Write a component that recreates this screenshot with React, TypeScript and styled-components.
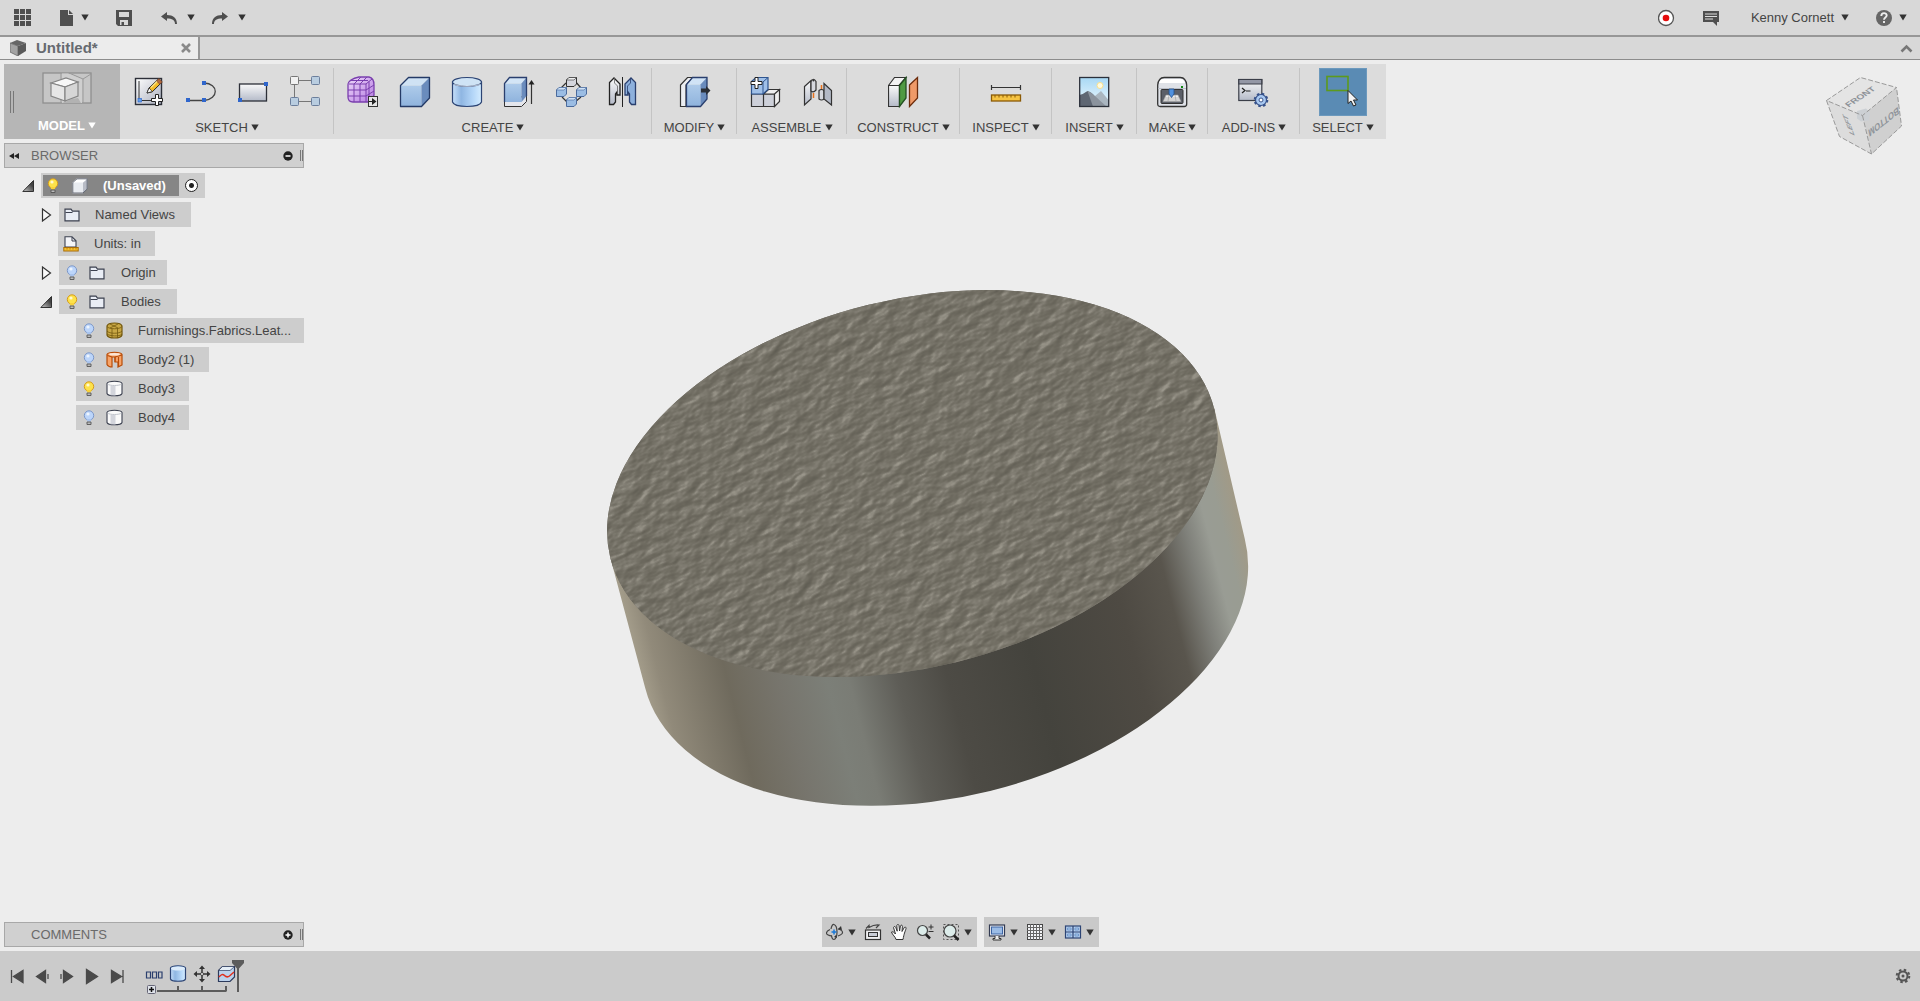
import React from "react";
import styled, { createGlobalStyle, css } from "styled-components";

const GlobalStyle = createGlobalStyle`
  *, *::before, *::after { box-sizing: border-box; }
  body {
    margin: 0;
    background: #ededed;
    color: #444;
    font: 13px/16px "Liberation Sans", Arial, sans-serif;
  }
  button {
    margin: 0;
    padding: 0;
    border: 0;
    background: none;
    color: inherit;
    font: inherit;
    cursor: pointer;
  }
  svg { display: block; flex: none; }
`;

/* ---------- layout ---------- */

const Page = styled.div`
  display: flex;
  flex-direction: column;
  min-height: 100vh;
`;

const TopBar = styled.header`
  display: flex;
  align-items: center;
  justify-content: space-between;
  height: 37px;
  padding: 0 13px;
  background: #d8d8d8;
  border-bottom: 2px solid #979797;
`;

const BarGroup = styled.div<{ $gap: number }>`
  display: flex;
  align-items: center;
  gap: ${(p) => p.$gap}px;
`;

const BarButton = styled.button<{ $gap?: number }>`
  display: flex;
  align-items: center;
  gap: ${(p) => p.$gap ?? 8}px;
  height: 24px;
`;

const TabRow = styled.div`
  display: flex;
  align-items: stretch;
  justify-content: space-between;
  height: 23px;
  background: #d8d8d8;
  border-bottom: 1px solid #8c8c8c;
`;

const Tab = styled.div`
  display: flex;
  align-items: center;
  width: 200px;
  padding: 0 7px 0 10px;
  background: #ececec;
  border-right: 2px solid #979797;
`;

const TabName = styled.span`
  flex: 1;
  padding-left: 10px;
  color: #666a70;
  font-size: 15px;
  font-weight: bold;
`;

const CollapseButton = styled.button`
  padding: 0 7px;
`;

const Viewport = styled.main`
  flex: 1;
  display: grid;
  grid-template: minmax(0, 1fr) / minmax(0, 1fr);
`;

const Canvas = styled.svg`
  grid-area: 1 / 1;
  width: 100%;
  height: 100%;
`;

const Overlay = styled.div`
  grid-area: 1 / 1;
  display: flex;
  flex-direction: column;
  justify-content: space-between;
  padding: 4px;
`;

const OverlayTop = styled.div`
  display: flex;
  justify-content: space-between;
`;

const OverlayLeft = styled.div`
  display: flex;
  flex-direction: column;
  align-items: flex-start;
  gap: 4px;
`;

const CubeHolder = styled.div`
  padding: 10px 12px 0 0;
`;

const OverlayBottom = styled.div`
  display: grid;
  grid-template-columns: 1fr auto 1fr;
  align-items: end;
`;

/* ---------- ribbon ---------- */

const Ribbon = styled.nav`
  display: flex;
  height: 75px;
  background: #dcdcdc;
`;

const Workspace = styled.button`
  display: flex;
  align-items: center;
  width: 116px;
  padding-left: 6px;
  background: #b6b6b6;
  color: #fff;
  font-weight: bold;
`;

const Grip = styled.span<{ $tall?: boolean }>`
  width: ${(p) => (p.$tall ? 4 : 3)}px;
  height: ${(p) => (p.$tall ? 22 : 11)}px;
  border: solid #777;
  border-width: 0 1px;
`;

const WorkspaceBody = styled.span`
  flex: 1;
  display: flex;
  flex-direction: column;
  align-items: center;
  gap: 14px;
  padding-top: 2px;
`;

const Label = styled.span`
  display: inline-flex;
  align-items: center;
  justify-content: center;
  gap: 3px;
`;

const Group = styled.section<{ $width: number }>`
  display: flex;
  flex-direction: column;
  align-items: center;
  min-width: ${(p) => p.$width}px;
  padding-top: 4px;
  background: linear-gradient(#c4c4c4, #c4c4c4) right 4px / 1px 66px no-repeat;
  &:last-child { background: none; }
`;

const IconRow = styled.div`
  display: flex;
  gap: 4px;
`;

const IconButton = styled.button<{ $active?: boolean }>`
  display: flex;
  align-items: center;
  justify-content: center;
  width: 48px;
  height: 48px;
  ${(p) =>
    p.$active &&
    css`
      background: #5a8bb4;
      border: 1px solid #6c99bd;
    `}
`;

const MenuButton = styled.button`
  height: 23px;
  white-space: nowrap;
`;

/* ---------- browser ---------- */

const Panel = styled.aside`
  width: 300px;
`;

const PanelHead = styled.div`
  display: flex;
  align-items: center;
  width: 300px;
  height: 25px;
  padding: 0 0 0 3px;
  background: #d0d0d0;
  border: 1px solid #a8a8a8;
`;

const HeadSlot = styled.span`
  width: 23px;
`;

const HeadTitle = styled.h2`
  flex: 1;
  margin: 0;
  color: #6a6a6a;
  font-size: 13px;
  font-weight: normal;
`;

const HeadTools = styled.span`
  display: flex;
  align-items: center;
  gap: 7px;
`;

const Tree = styled.ul`
  display: flex;
  flex-direction: column;
  gap: 4px;
  margin: 0;
  padding: 5px 0 0;
  list-style: none;
`;

const Row = styled.li<{ $indent: number }>`
  display: flex;
  align-items: center;
  height: 25px;
  padding-left: ${(p) => p.$indent}px;
`;

const Toggle = styled.button`
  width: 19px;
`;

const Node = styled.div<{ $width: number; $root?: boolean }>`
  display: flex;
  align-items: center;
  min-width: ${(p) => p.$width}px;
  height: 25px;
  background: #cdcdcd;
  ${(p) => p.$root && css`padding: 2px;`}
`;

const RootName = styled.div`
  display: flex;
  align-items: center;
  width: 136px;
  height: 21px;
  background: #868686;
  color: #fff;
  font-weight: bold;
`;

const Slot = styled.span<{ $width: number }>`
  display: flex;
  justify-content: center;
  width: ${(p) => p.$width}px;
`;

const NodeText = styled.span<{ $gap?: number }>`
  padding-left: ${(p) => p.$gap ?? 11}px;
  white-space: nowrap;
`;

const Radio = styled.input`
  appearance: none;
  width: 13px;
  height: 13px;
  margin: 0 0 0 6px;
  border: 1px solid #222;
  border-radius: 50%;
  background: radial-gradient(circle, #222 0 2px, #fff 3px);
`;

/* ---------- bottom ---------- */

const NavBars = styled.div`
  display: flex;
  gap: 7px;
`;

const NavBar = styled.div`
  display: flex;
  align-items: center;
  gap: 8px;
  height: 30px;
  padding: 0 5px 0 4px;
  background: #c9c9c9;
`;

const NavButton = styled.button`
  display: flex;
  align-items: center;
  gap: 4px;
`;

const Timeline = styled.footer`
  display: flex;
  align-items: center;
  justify-content: space-between;
  height: 50px;
  padding: 0 9px;
  background: #cbcbcb;
`;

const Playback = styled.div`
  display: flex;
  gap: 9px;
`;

const TimelineLeft = styled.div`
  display: flex;
  align-items: center;
  gap: 20px;
`;

/* ---------- small glyphs ---------- */

const Caret = ({ fill = "#333" }: { fill?: string }) => (
  <svg width="8" height="7" viewBox="0 0 8 7" aria-hidden="true">
    <path d="M.3 .5h7.400L4 6.500z" fill={fill} />
  </svg>
);

const Ico = ({ s = 32, w, children }: { s?: number; w?: number; children: React.ReactNode }) => (
  <svg width={w ?? s} height={s} viewBox={`0 0 ${w ?? s} ${s}`} fill="none" aria-hidden="true">
    {children}
  </svg>
);

const HiddenDefs = styled.svg`
  position: absolute;
`;

const Defs = () => (
  <HiddenDefs width="0" height="0" aria-hidden="true">
    <defs>
      <linearGradient id="blueFront" x1="0" y1="0" x2="0" y2="1">
        <stop offset="0" stopColor="#aecbea" /><stop offset="1" stopColor="#8fb3dd" />
      </linearGradient>
      <linearGradient id="blueRound" x1="0" y1="0" x2="1" y2="0">
        <stop offset="0" stopColor="#c6dffa" /><stop offset=".3" stopColor="#8fb6e2" />
        <stop offset=".7" stopColor="#b4d6f8" /><stop offset="1" stopColor="#d4ecff" />
      </linearGradient>
      <linearGradient id="grey" x1="0" y1="0" x2="0" y2="1">
        <stop offset="0" stopColor="#fafafa" /><stop offset="1" stopColor="#b4bac8" />
      </linearGradient>
      <linearGradient id="paper" x1="0" y1="0" x2="1" y2="1">
        <stop offset="0" stopColor="#fff" /><stop offset="1" stopColor="#a9aebd" />
      </linearGradient>
      <linearGradient id="purple" x1="0" y1="0" x2="1" y2="1">
        <stop offset="0" stopColor="#eed9fb" /><stop offset="1" stopColor="#b47ae0" />
      </linearGradient>
      <linearGradient id="sky" x1="0" y1="0" x2="0" y2="1">
        <stop offset="0" stopColor="#a8d8f4" /><stop offset="1" stopColor="#eef9ff" />
      </linearGradient>
      <linearGradient id="arrowDark" x1="1" y1="0" x2="0" y2="1">
        <stop offset=".3" stopColor="#444" /><stop offset="1" stopColor="#ccc" />
      </linearGradient>
    </defs>
  </HiddenDefs>
);

const NAVY = "#2a3f6e";

const MiniCube = ({ x, y, grey }: { x: number; y: number; grey?: boolean }) => (
  <g transform={`translate(${x - 5} ${y - 5})`} stroke={grey ? "#333" : "#4a6a9c"}>
    <path d="M.5 3L3 .5h7.500V7L8 9.500H.5z" fill={grey ? "#d4d6de" : "#9bbde4"} />
    <path d="M.5 3L3 .5h7.500L8 3z" fill={grey ? "#eee" : "#cfe2f6"} strokeWidth=".6" />
  </g>
);

const Dot = ({ x, y }: { x: number; y: number }) => (
  <rect x={x - 2} y={y - 2} width="4" height="4" fill="#2f66cc" />
);

const WhitePlus = ({ x, y }: { x: number; y: number }) => (
  <path transform={`translate(${x} ${y})`} d="M-1.500-5.500h3v4h4v3h-4v4h-3v-4h-4v-3h4z" fill="#fff" stroke="#222" />
);

/* ---------- ribbon icons ---------- */

const SketchIcon = () => (
  <Ico>
    <rect x="2.500" y="2.500" width="26" height="26" fill="url(#paper)" stroke="#2c2f38" strokeWidth="1.400" />
    <path d="M6 5v18M9 24.500h12" stroke="#333" />
    <rect x="5" y="22.500" width="3.500" height="3.500" fill="#62a0e8" stroke="#2f66cc" strokeWidth=".7" />
    <path d="M14 17l2-5L25.500 3l3.300 3.300-9.500 9.500z" fill="#f4bb2a" stroke="#222" />
    <path d="M16 12l3.300 3.500L14 17z" fill="#fff" stroke="#222" strokeWidth=".7" />
    <path d="M23.500 5L26 2.600l3.200 3.300-2.400 2.300z" fill="#b26a42" stroke="#7a4326" strokeWidth=".7" />
    <path d="M18 11.500l6-6" stroke="#fde588" strokeWidth="1.300" />
    <WhitePlus x={24} y={24} />
  </Ico>
);
const LineIcon = () => (
  <Ico>
    <path d="M3 24.500h16c15-1.500 15-17 0-17.500" stroke="#444" strokeWidth="1.300" />
    <Dot x={3} y={24} /><Dot x={19} y={24} /><Dot x={19} y={7} />
  </Ico>
);
const RectIcon = () => (
  <Ico>
    <rect x="2.500" y="8" width="27" height="17" fill="url(#grey)" stroke="#2c2f38" strokeWidth="1.300" />
    <Dot x={3} y={24} /><Dot x={29} y={8} />
  </Ico>
);
const PatternIcon = () => (
  <Ico>
    <path d="M10 4.500h12M5.500 9v12M10 25.500h12" stroke="#777" />
    <rect x="1.500" y=".5" width="8" height="8" rx="1" fill="#f1f1f1" stroke="#777" />
    {[[22.5, 0.5], [1.5, 21.5], [22.5, 21.5]].map(([x, y]) => (
      <rect key={`${x}-${y}`} x={x} y={y} width="8" height="8" rx="1" fill="#b9cde0" stroke="#6c7f9c" />
    ))}
  </Ico>
);
const FormIcon = () => (
  <Ico>
    <path d="M1 9Q1 6 4 4t8-3h10q5 1 5 8v10q-1 5-6 7H6q-5 0-5-5z" fill="url(#purple)" stroke="#7a3fae" strokeWidth="1.300" />
    <path d="M1 14h18l8-5M1 20h18l8-5M2 8h17l6-5M7 8v18M13 8v18M19 8v18M7 8l7-7M13 8l7-7M4 4.500h17M22 5.500v19" stroke="#7a3fae" />
    <rect x="21.500" y="20.500" width="9" height="10" fill="#e6e6e6" stroke="#333" />
    <path d="M22 25h3v-3l4.500 3.500L25 29v-3h-3z" fill="#222" />
  </Ico>
);
const BoxIcon = () => (
  <Ico>
    <path d="M1.500 9.500h21v21h-21z" fill="url(#blueFront)" />
    <path d="M1.500 9.500l8-8h21l-8 8z" fill="#cfe2f4" />
    <path d="M22.500 9.500l8-8V22l-8 8.500z" fill="#6a8cbd" />
    <path d="M1.500 9.500l8-8h21V22l-8 8.500h-21z" stroke="#243a66" strokeWidth="1.300" strokeLinejoin="round" />
  </Ico>
);
const CylinderIcon = () => (
  <Ico>
    <path d="M1.500 6v20c2 6 27 6 29 0V6z" fill="url(#blueRound)" stroke="#2c4474" strokeWidth="1.200" />
    <ellipse cx="16" cy="6" rx="14.500" ry="4.500" fill="#cfe3f5" stroke="#2c4474" strokeWidth="1.200" />
    <path d="M3 8c3 3 23 3 26 0" stroke="#fff" strokeWidth=".7" />
  </Ico>
);
const ExtrudeIcon = () => (
  <Ico>
    <path d="M1.500 25.500v5h17l5-5v-6z" fill="#e4e6ec" stroke="#333" />
    <path d="M1.500 7.500h17v18.500h-17z" fill="url(#blueFront)" />
    <path d="M1.500 7.500l5-6h17l-5 6z" fill="#d3e5f6" />
    <path d="M18.500 7.500l5-6V20l-5 6z" fill="#6a8cbd" />
    <path d="M1.500 26V7.500l5-6h17V20" stroke={NAVY} strokeWidth="1.300" />
    <path d="M28.500 28V6" stroke="#333" strokeWidth="1.200" />
    <path d="M28.500 4l3 4.500h-6z" fill="#222" />
  </Ico>
);
const RoundPatternIcon = () => (
  <Ico>
    <path d="M20 5l6 7M7 21l5 5M26 21l-6 5M6 12l5-5" stroke="#333" strokeWidth="1.200" />
    <MiniCube x={16} y={6} grey /><MiniCube x={6} y={16} /><MiniCube x={26} y={16} /><MiniCube x={16} y={26} />
  </Ico>
);
const MirrorIcon = () => (
  <Ico>
    <path d="M2.500 28.500v-22L7 2l6 6v11h-3v-3l-1.500 2v8l-2 2.500z" fill="url(#grey)" stroke="#222" strokeWidth="1.300" />
    <path d="M7.500 2v5l3 3v8" stroke="#666" strokeWidth=".8" />
    <path d="M15.500 1v30" stroke="#222" />
    <path d="M28.500 28.500v-22L24 2l-6 6v11h3v-3l1.500 2v8l2 2.500z" fill="#8db0dc" stroke={NAVY} strokeWidth="1.300" />
    <path d="M23.500 2v5l-3 3v8" stroke={NAVY} strokeWidth=".8" />
  </Ico>
);
const PressPullIcon = () => (
  <Ico>
    <path d="M1.500 9l7-7.500H14L7 9v21.500H1.500z" fill="#eceef2" stroke="#333" strokeWidth="1.200" />
    <path d="M7.500 8.500h14v22h-14z" fill="url(#blueFront)" />
    <path d="M7.500 8.500l6-7H28l-6.500 7z" fill="#d0e3f6" />
    <path d="M21.500 8.500L28 1.500V23l-6.500 7.500z" fill="#6a8cbd" />
    <path d="M7.500 30.500v-22l6-7H28V23l-6.500 7.500z" stroke={NAVY} strokeWidth="1.300" />
    <path d="M22 12.500h5V10l4.500 4.500L27 19v-2.500h-5z" fill="#2b2f36" />
  </Ico>
);
const NewComponentIcon = () => (
  <Ico>
    <path d="M1.500 18h12v12.500h-12zM13.500 18h11v12.500h-11z" fill="#cdd0d9" stroke="#333" strokeWidth="1.200" />
    <path d="M13.500 18l5-4.500h11l-5 4.500zM24.500 30.500l5-5v-12l-5 4.500z" fill="#eee" stroke="#333" strokeWidth="1.200" />
    <path d="M1.500 5.500L6 1.500h12v12l-5 4.500H1.500z" fill="#a0c0e8" stroke="#2f5590" strokeWidth="1.200" />
    <path d="M13 6v12M13 6l5-4.500" stroke="#2f5590" />
    <WhitePlus x={6.500} y={7} />
  </Ico>
);
const JointIcon = () => (
  <Ico>
    <path d="M2.500 10.500L9 4.500V23l-6.500 6z" fill="url(#grey)" stroke="#333" strokeWidth="1.200" />
    <path d="M9 5.500q2.500-4.500 5 0V14q-2.500 3-5 1z" fill="#d6d8de" stroke="#333" strokeWidth="1.200" />
    <circle cx="11.500" cy="4.500" r="1" fill="#333" />
    <path d="M11.500 17v5M19.500 9v6" stroke="#e8721c" strokeWidth="1.500" />
    <path d="M17 14.500q2.500-2 5 0V23q-2.500 2-5 0z" fill="#d6d8de" stroke="#333" strokeWidth="1.200" />
    <path d="M22 7.500l7.500 7v14.500L22 23z" fill="#b3b9c6" stroke="#333" strokeWidth="1.200" />
  </Ico>
);
const PlaneIcon = () => (
  <Ico>
    <path d="M.5 9.500h11v21H.5z" fill="url(#grey)" stroke="#333" strokeWidth="1.200" />
    <path d="M.5 9.500l6-8H18l-7 8z" fill="#f3f3f3" stroke="#333" strokeWidth="1.200" />
    <path d="M11.500 9.500L18 1.500V22l-6.500 8.500z" fill="#4f9a42" stroke="#234f22" strokeWidth="1.300" />
    <path d="M21.500 9l8-7.500V22l-8 8.500z" fill="#ef9a68" stroke="#6c2c0c" strokeWidth="1.300" />
  </Ico>
);
const RulerIcon = () => (
  <Ico>
    <path d="M1.500 11.500h29M1.500 9v5M30.500 9v5" stroke="#333" strokeWidth="1.200" />
    <rect x="1.500" y="19" width="29" height="6" fill="#f5c342" stroke="#8a5a05" strokeWidth="1.300" />
    <path d="M5 19v2.500M9 19v2.500M13 19v2.500M17 19v2.500M21 19v2.500M25 19v2.500" stroke="#8a5a05" />
  </Ico>
);
const PictureIcon = () => (
  <Ico>
    <rect x=".5" y="1.500" width="29" height="29" fill="url(#sky)" />
    <circle cx="21" cy="9.500" r="3" fill="#fffbe0" stroke="#fadf8a" />
    <path d="M16 20l6-5 7.500 9v6H17z" fill="#aab6c0" />
    <path d="M.5 19q4-1 8-4 4 1 8 6l9 9.500H.5z" fill="#5e6672" />
    <path d="M8.500 15l4 2 15 13.500H14z" fill="#8b939d" />
    <rect x=".7" y="1.500" width="29" height="29" stroke="#2b303a" strokeWidth="1.300" />
  </Ico>
);
const PrinterIcon = () => (
  <Ico>
    <path d="M.7 9q0-3 2-5.500 1.500-2 4.500-2h16q3 0 4.500 2 2 2.500 2 5.500v19q0 2.500-2.500 2.500h-24q-2.500 0-2.500-2.500z" fill="#dfe2e8" stroke="#333" strokeWidth="1.300" />
    <path d="M2 7q1.500-4 4-4h18q2.500 0 4 4z" fill="#fff" />
    <path d="M1 12.500h28" stroke="#b9bdc6" />
    <rect x="4" y="13.500" width="22" height="14" rx="1" fill="#5b5f68" stroke="#333" />
    <path d="M9 19h12l3 6.500H6z" fill="#eee" stroke="#999" strokeWidth=".6" />
    <path d="M8 22h14M7 24h16M12 19l-1 6M18 19l1 6" stroke="#999" strokeWidth=".6" />
    <path d="M12 13h5v5l-2.500 3.500L12 18z" fill="#4f90de" stroke="#24508c" strokeWidth=".8" />
    <rect x="24" y="10" width="2" height="2" fill="#118811" />
  </Ico>
);
const AddInsIcon = () => (
  <Ico>
    <rect x=".8" y="3.500" width="23" height="21" fill="url(#grey)" stroke="#3a3e48" strokeWidth="1.200" />
    <path d="M.8 3.500h23V8H.8z" fill="#9397a6" stroke="#3a3e48" strokeWidth="1.200" />
    <path d="M4 12l3 2.500L4 17M8 15h4.500" stroke="#222" strokeWidth="1.200" />
    <circle cx="23" cy="24" r="5.500" fill="#a8c8f0" stroke="#36518a" strokeWidth="1.200" />
    <circle cx="23" cy="24" r="6.300" stroke="#36518a" strokeWidth="2" strokeDasharray="2.500 2.450" />
    <circle cx="23" cy="24" r="2" fill="#fff" stroke="#36518a" />
  </Ico>
);
const SelectIcon = () => (
  <Ico s={34}>
    <rect x="1" y="1.500" width="21" height="14" stroke="#5d9a1c" strokeWidth="1.600" />
    <path d="M22 15.500v13l3-2.500 2.500 5 2.500-1-2.500-5h4z" fill="#f4f4f4" stroke="#222" />
  </Ico>
);
const ModelIcon = () => (
  <Ico w={50} s={32}>
    <rect x="1" y="1" width="48" height="30" fill="#c6c6c6" stroke="#8f8f8f" strokeWidth="1.300" />
    <path d="M19 1v30M27 1l14 6 8-5M41 7v24" stroke="#999" />
    <path d="M20 1.500h6l14 6V31H20z" fill="#cfcfcf" />
    <path d="M30 27l6-1 3 5H20z" fill="#b2b2b2" />
    <path d="M9 11l15-5 12 4-13 5z" fill="#f8f8f8" stroke="#858585" strokeWidth="1.200" />
    <path d="M9 11l14 4v14L9 24z" fill="#e6e6e6" stroke="#858585" strokeWidth="1.200" />
    <path d="M23 15l13-5v14l-13 5z" fill="#d6d6d6" stroke="#858585" strokeWidth="1.200" />
  </Ico>
);

/* ---------- browser icons ---------- */

const Bulb = ({ on }: { on?: boolean }) => (
  <Ico s={16} w={12}>
    <circle cx="6" cy="5.500" r="4.700" fill={on ? "#fde24a" : "#bcd5fa"} stroke={on ? "#d59b1c" : "#7c97c8"} />
    <path d="M3.500 9h5l-.8 2.500H4.300z" fill={on ? "#f8d23c" : "#a9c4ee"} />
    <path d="M4 12h4v2.500H4z" fill="#bbb" stroke="#555" strokeWidth=".9" />
    <circle cx="5" cy="4" r="1.600" fill="#fff" opacity=".75" />
  </Ico>
);
const Folder = () => (
  <Ico s={14} w={16}>
    <path d="M1 3.500V1.200h6l1.500 2h6.500v9.600H1z" fill="#e9edf5" stroke="#3c4150" strokeWidth="1.200" />
    <path d="M1.500 4.500h7" stroke="#3c4150" />
  </Ico>
);
const UnitsIcon = () => (
  <Ico s={16} w={16}>
    <path d="M2 11V.8h7l4 4V11z" fill="#f4f5f8" stroke="#3c4150" strokeWidth="1.100" />
    <path d="M9 1v4h4" stroke="#3c4150" />
    <rect x=".8" y="11.500" width="14.400" height="3.500" fill="#f5c030" stroke="#a86c08" />
    <path d="M4 12v1.500M7 12v1.500M10 12v1.500M13 12v1.500" stroke="#a86c08" strokeWidth=".8" />
  </Ico>
);
const RootIcon = () => (
  <Ico s={16} w={16}>
    <path d="M.8 4.500L5 .8h10v10L11 15H.8z" fill="#e8ebf0" stroke="#f8f8f8" />
    <path d="M11 4.500V15l4.200-4V1z" fill="#b8bcc6" />
    <path d="M.8 4.500L5 .8h10.200L11 4.500z" fill="#fff" />
    <path d="M.8 15V4.500L5 .8h10.200V11L11 15z" stroke="#555a66" strokeWidth=".9" />
  </Ico>
);
const BodyIcon = ({ kind }: { kind: "plain" | "gold" | "sheet" }) => (
  <Ico s={17} w={17}>
    {kind === "plain" && (
      <>
        <path d="M1 3.500v10c1 3 14 3 15 0v-10c-1-3-14-3-15 0z" fill="#fafafa" stroke="#3c4150" strokeWidth="1.100" />
        <path d="M4.500 6h5v9.500h-5z" fill="#c9ccd4" opacity=".8" />
        <path d="M1.500 4c2 2 12 2 14 0" stroke="#c0c4cc" />
      </>
    )}
    {kind === "gold" && (
      <>
        <path d="M1 4v9c1 4 14 4 15 0V4c-1-4-14-4-15 0z" fill="#c9a845" stroke="#74590f" strokeWidth="1.200" />
        <path d="M1 4.500c2 3 13 3 15 0M1 9c2 3 13 3 15 0M6 6.500V16M11.500 6.500V16M4 2l8 4M12 2L4 6M1 12c2 2 13 3 15 0" stroke="#74590f" strokeWidth=".8" />
      </>
    )}
    {kind === "sheet" && (
      <>
        <path d="M1 3.500v10c1 2 3 2.500 5 2.500V6h3v5h3v5l4-2V3.500c-1-3-14-3-15 0z" fill="#f7a468" stroke="#b84c08" strokeWidth="1.200" />
        <path d="M9 11V6M12.500 6v9M1.500 4.500l4.500 1.500M9 6l7-2" stroke="#b84c08" strokeWidth="1.100" />
        <ellipse cx="8.500" cy="3.300" rx="5.500" ry="1.300" fill="#fbe6d5" />
      </>
    )}
  </Ico>
);
const OpenArrow = () => (
  <Ico s={12} w={12}>
    <path d="M11.500 .5v11H.8z" fill="url(#arrowDark)" stroke="#222" strokeWidth=".9" />
  </Ico>
);
const ClosedArrow = () => (
  <Ico s={14} w={12}>
    <path d="M2.500 1v12L10.500 7z" fill="#fafafa" stroke="#333" strokeWidth="1.200" />
  </Ico>
);

/* ---------- data ---------- */

type RibbonGroup = { label: string; width: number; icons: [string, () => React.JSX.Element][]; active?: boolean };

const groups: RibbonGroup[] = [
  { label: "SKETCH", width: 214, icons: [["Create Sketch", SketchIcon], ["Line", LineIcon], ["Rectangle", RectIcon], ["Pattern", PatternIcon]] },
  {
    label: "CREATE", width: 318,
    icons: [["Create Form", FormIcon], ["Box", BoxIcon], ["Cylinder", CylinderIcon], ["Extrude", ExtrudeIcon], ["Circular Pattern", RoundPatternIcon], ["Mirror", MirrorIcon]],
  },
  { label: "MODIFY", width: 85, icons: [["Press Pull", PressPullIcon]] },
  { label: "ASSEMBLE", width: 110, icons: [["New Component", NewComponentIcon], ["Joint", JointIcon]] },
  { label: "CONSTRUCT", width: 113, icons: [["Offset Plane", PlaneIcon]] },
  { label: "INSPECT", width: 92, icons: [["Measure", RulerIcon]] },
  { label: "INSERT", width: 85, icons: [["Attached Canvas", PictureIcon]] },
  { label: "MAKE", width: 71, icons: [["3D Print", PrinterIcon]] },
  { label: "ADD-INS", width: 92, icons: [["Scripts and Add-Ins", AddInsIcon]] },
  { label: "SELECT", width: 86, icons: [["Select", SelectIcon]], active: true },
];

const bodies: { name: string; on?: boolean; kind: "plain" | "gold" | "sheet"; width: number }[] = [
  { name: "Furnishings.Fabrics.Leat...", kind: "gold", width: 228 },
  { name: "Body2 (1)", kind: "sheet", width: 133 },
  { name: "Body3", on: true, kind: "plain", width: 113 },
  { name: "Body4", kind: "plain", width: 113 },
];

/* ---------- scene ---------- */

const Scene = () => (
  <Canvas viewBox="0 60 1920 891" preserveAspectRatio="xMidYMid meet" role="img" aria-label="Cylinder body with leather top">
    <defs>
      <linearGradient id="side" gradientUnits="userSpaceOnUse" x1="610" y1="558" x2="1211" y2="405">
        <stop offset="0" stopColor="#a49d8b" />
        <stop offset=".03" stopColor="#918a7a" />
        <stop offset=".135" stopColor="#6f6a5d" />
        <stop offset=".215" stopColor="#77756d" />
        <stop offset=".29" stopColor="#7c7f78" />
        <stop offset=".325" stopColor="#7a7c75" />
        <stop offset=".4" stopColor="#5e5d57" />
        <stop offset=".48" stopColor="#4d4b45" />
        <stop offset=".62" stopColor="#44433d" />
        <stop offset=".78" stopColor="#4e4a43" />
        <stop offset=".86" stopColor="#59554d" />
        <stop offset=".91" stopColor="#7f807a" />
        <stop offset=".945" stopColor="#999c94" />
        <stop offset=".97" stopColor="#999c92" />
        <stop offset="1" stopColor="#a19a87" />
      </linearGradient>
      <clipPath id="top">
        <ellipse cx="912.300" cy="483.500" rx="311" ry="184" transform="rotate(-13.760 912.300 483.500)" />
      </clipPath>
      <filter id="leather" x="0" y="0" width="1" height="1" colorInterpolationFilters="sRGB">
        <feTurbulence type="fractalNoise" baseFrequency="0.055 0.100" numOctaves="3" seed="11" result="n" />
        <feDiffuseLighting in="n" surfaceScale="2.700" diffuseConstant="0.780" lightingColor="#fff">
          <feDistantLight azimuth="60" elevation="40" />
        </feDiffuseLighting>
        <feComponentTransfer>
          <feFuncR type="table" tableValues=".36 .39 .410 .430 .460 .510 .620 .720 .780" />
          <feFuncG type="table" tableValues=".35 .38 .397 .417 .447 .496 .605 .705 .770" />
          <feFuncB type="table" tableValues=".32 .34 .357 .375 .405 .455 .560 .660 .740" />
        </feComponentTransfer>
      </filter>
    </defs>
    <path d="M610.400 558L645.200 687.900A300 177.860 -13.760 0 0 1244.800 539.100L1214.300 408.300z" fill="url(#side)" />
    <g clipPath="url(#top)">
      <rect x="600" y="280" width="630" height="410" fill="#76726a" />
      <g transform="rotate(-24 912 483)">
        <rect x="570" y="180" width="690" height="610" filter="url(#leather)" />
      </g>
    </g>
  </Canvas>
);

const ViewCube = () => (
  <svg width="80" height="84" viewBox="1824 74 80 84" role="img" aria-label="View cube">
    <path d="M1826.500 100.500l34-23 36 10-34 28z" fill="#e4e4e4" />
    <path d="M1826.500 100.500l36 15 9 38.500-32-17.500z" fill="#dcdcdc" />
    <path d="M1862.500 115.500l34-28 5 38.500-30 28z" fill="#d0d0d0" />
    <path d="M1857 111l9-2.500 4 4-1 8-8 1-4-3z" fill="#ccd0d4" />
    <path
      d="M1826.500 100.500l34-23 36 10-34 28zl13 36 32 17.500 30-28-5-38.500M1862.500 115.500l9 38.500"
      fill="none" stroke="#999" strokeDasharray="5 2"
    />
    <g fill="#8e9399" fontSize="10" fontWeight="bold" textAnchor="middle">
      <text transform="matrix(.8 -.52 .65 .5 1862.500 98.500)">FRONT</text>
      <text transform="matrix(-.3 -.8 .72 .36 1851 126)">LEFT</text>
      <text transform="matrix(-.7 .55 -.2 -.95 1883 118.500)">BOTTOM</text>
    </g>
  </svg>
);

/* ---------- parts ---------- */

const HeadDot = ({ plus }: { plus?: boolean }) => (
  <Ico s={10}>
    <circle cx="5" cy="5" r="4.700" fill="#222" />
    <path d={plus ? "M2.500 5h5M5 2.500v5" : "M2.500 5h5"} stroke="#fff" strokeWidth="1.500" />
  </Ico>
);

const TimelineFeatures = () => (
  <svg width="100" height="36" viewBox="145 960 100 36" fill="none" role="img" aria-label="Design history">
    <path d="M146.500 974h4v6h-4zM152.500 974h4v6h-4zM158.500 974h3.500v6h-3.500z" stroke={NAVY} strokeWidth="1.200" />
    <path d="M170.500 970v11c1 3 14 3 15 0v-11c-1-3-14-3-15 0z" fill="url(#blueRound)" stroke="#2c4474" strokeWidth="1.200" />
    <ellipse cx="178" cy="970.500" rx="7" ry="2" fill="#dcecfb" />
    <path d="M202 970v4M202 978v4M196 976h4M204 976h4" stroke="#333" strokeWidth="1.500" />
    <path d="M202 967.500l3 3.500h-6zM202 984.500l3-3.500h-6zM193.500 976l3.500-3v6zM210.500 976l-3.500-3v6z" fill="#333" />
    <circle cx="202" cy="976" r="1.500" stroke="#333" fill="#fff" />
    <path d="M218.500 972.500l4-4h12v10.500l-4.500 4.500h-11.500z" fill="#bcd2ec" stroke="#2c3a5c" strokeWidth="1.200" />
    <path d="M218.500 972.500l4-4h12l-4.500 4z" fill="#e6eff8" stroke="#2c3a5c" strokeWidth=".7" />
    <path d="M219 979q3-4 5.500-1.500t5 .5l4.500-4" stroke="#e0301e" strokeWidth="1.500" />
    <path d="M157 993h69.500M178 993v-5M202 993v-5M226 993v-5" stroke="#5c5c5c" strokeWidth="2" />
    <rect x="147.500" y="987.500" width="8" height="8" rx="1" fill="#dfe3ea" stroke="#667" />
    <path d="M149 991.500h5M151.500 989v5" stroke="#111" strokeWidth="1.500" />
    <path d="M232 962h12v3l-5 5.500V994h-2v-23.500l-5-5.500z" fill="#5c5c5c" />
  </svg>
);

const playPaths: [string, string][] = [
  ["Go to start", "M2.500 2v13M14 2.500v12L4.500 8.500z"],
  ["Step back", "M2.500 8.500l9-6v12zM14 6v5"],
  ["Step forward", "M2 6v5M4.500 2.500v12l9-6z"],
  ["Play", "M2.500 1.500v14l11-7z"],
  ["Go to end", "M2.500 2.500v12l10-6zM14 2v13"],
];

const App = () => (
  <Page>
    <GlobalStyle />
    <Defs />
    <TopBar>
      <BarGroup $gap={22}>
        <BarButton aria-label="Data panel">
          <Ico s={19}>
            {[1, 7, 13].map((y) => [1, 7, 13].map((x) => <rect key={`${x}-${y}`} x={x} y={y} width="5" height="5" fill="#4f4f4f" />))}
          </Ico>
        </BarButton>
        <BarGroup $gap={27}>
          <BarButton aria-label="File">
            <Ico s={18} w={19}>
              <path d="M6 1h8v5h5v11H6zM15 1l4 4h-4z" fill="#4f4f4f" />
            </Ico>
            <Caret />
          </BarButton>
          <BarButton aria-label="Save">
            <Ico s={18} w={18}>
              <path d="M0 1h16v16H2l-2-2z" fill="#4f4f4f" />
              <path d="M3 3h10v5H3zM4 11h8v5H4z" fill="#d8d8d8" />
              <path d="M5.500 13H8v3H5.500z" fill="#4f4f4f" />
            </Ico>
          </BarButton>
          <BarGroup $gap={17}>
            <BarButton aria-label="Undo">
              <Ico s={14} w={18}>
                <path d="M0 5.500L6 1v3c6 0 10 3 10 9h-2c0-4-3-5.500-8-5.500V10z" fill="#4f4f4f" />
              </Ico>
              <Caret />
            </BarButton>
            <BarButton aria-label="Redo">
              <Ico s={14} w={18}>
                <path d="M16 5.500L10 1v3C4 4 0 7 0 13h2c0-4 3-5.500 8-5.500V10z" fill="#4f4f4f" />
              </Ico>
              <Caret />
            </BarButton>
          </BarGroup>
        </BarGroup>
      </BarGroup>
      <BarGroup $gap={26}>
        <BarButton aria-label="Record">
          <Ico s={18}>
            <circle cx="8" cy="9" r="7.500" fill="#fff" stroke="#555" strokeWidth="1.300" />
            <circle cx="8" cy="9" r="3.300" fill="#e60c0c" />
          </Ico>
        </BarButton>
        <BarGroup $gap={31}>
          <BarButton aria-label="Comments">
            <Ico s={18}>
              <path d="M1 2h16v11h-2v4l-4-4H1z" fill="#4f4f4f" />
              <path d="M3 5h12M3 7.500h12M3 10h8" stroke="#ddd" />
            </Ico>
          </BarButton>
          <BarButton $gap={7}>Kenny Cornett <Caret /></BarButton>
        </BarGroup>
        <BarButton aria-label="Help" $gap={6}>
          <Ico s={18}>
            <circle cx="9" cy="9" r="8" fill="#666" />
            <path d="M6.300 7c0-4 5.600-3.500 5.400-.5-.1 2-2.700 2-2.700 4.200M9 12v2" stroke="#eee" strokeWidth="1.900" />
          </Ico>
          <Caret />
        </BarButton>
      </BarGroup>
    </TopBar>
    <TabRow>
      <Tab>
        <Ico s={16} w={16}>
          <path d="M0 3l7-3 9 3-8 3z" fill="#666" />
          <path d="M0 3l8 3v10l-8-4z" fill="#a3a3a3" stroke="#666" strokeWidth=".8" />
          <path d="M8 6l8-3v8l-8 5z" fill="#5a5a5a" />
        </Ico>
        <TabName>Untitled*</TabName>
        <button aria-label="Close tab">
          <Ico s={10}>
            <path d="M1 1l8 8M9 1L1 9" stroke="#8a8a8a" strokeWidth="2.600" />
          </Ico>
        </button>
      </Tab>
      <CollapseButton aria-label="Collapse">
        <Ico s={9} w={13}>
          <path d="M1.500 7.500l5-5 5 5" stroke="#777" strokeWidth="2.600" />
        </Ico>
      </CollapseButton>
    </TabRow>
    <Viewport>
      <Scene />
      <Overlay>
        <OverlayTop>
          <OverlayLeft>
            <Ribbon>
              <Workspace>
                <Grip $tall />
                <WorkspaceBody>
                  <ModelIcon />
                  <Label>MODEL <Caret fill="#fff" /></Label>
                </WorkspaceBody>
              </Workspace>
              {groups.map((g) => (
                <Group key={g.label} $width={g.width}>
                  <IconRow>
                    {g.icons.map(([name, Icon]) => (
                      <IconButton key={name} aria-label={name} $active={g.active}>
                        <Icon />
                      </IconButton>
                    ))}
                  </IconRow>
                  <MenuButton><Label>{g.label} <Caret /></Label></MenuButton>
                </Group>
              ))}
            </Ribbon>
            <Panel>
              <PanelHead>
                <HeadSlot>
                  <Ico s={8} w={14}>
                    <path d="M6 1v6L1 4zM11 1v6L6 4z" fill="#222" />
                  </Ico>
                </HeadSlot>
                <HeadTitle>BROWSER</HeadTitle>
                <HeadTools>
                  <button aria-label="Collapse browser"><HeadDot /></button>
                  <Grip />
                </HeadTools>
              </PanelHead>
              <Tree>
                <Row $indent={18}>
                  <Toggle aria-label="Collapse root"><OpenArrow /></Toggle>
                  <Node $width={164} $root>
                    <RootName>
                      <Slot $width={20}><Bulb on /></Slot>
                      <Slot $width={34}><RootIcon /></Slot>
                      <NodeText $gap={6}>(Unsaved)</NodeText>
                    </RootName>
                    <Radio type="radio" defaultChecked aria-label="Activate component" />
                  </Node>
                </Row>
                <Row $indent={36}>
                  <Toggle aria-label="Expand Named Views"><ClosedArrow /></Toggle>
                  <Node $width={132}>
                    <Slot $width={25}><Folder /></Slot>
                    <NodeText>Named Views</NodeText>
                  </Node>
                </Row>
                <Row $indent={54}>
                  <Node $width={97}>
                    <Slot $width={25}><UnitsIcon /></Slot>
                    <NodeText>Units: in</NodeText>
                  </Node>
                </Row>
                <Row $indent={36}>
                  <Toggle aria-label="Expand Origin"><ClosedArrow /></Toggle>
                  <Node $width={108}>
                    <Slot $width={25}><Bulb /></Slot>
                    <Slot $width={26}><Folder /></Slot>
                    <NodeText>Origin</NodeText>
                  </Node>
                </Row>
                <Row $indent={36}>
                  <Toggle aria-label="Collapse Bodies"><OpenArrow /></Toggle>
                  <Node $width={118}>
                    <Slot $width={25}><Bulb on /></Slot>
                    <Slot $width={26}><Folder /></Slot>
                    <NodeText>Bodies</NodeText>
                  </Node>
                </Row>
                {bodies.map((b) => (
                  <Row key={b.name} $indent={72}>
                    <Node $width={b.width}>
                      <Slot $width={25}><Bulb on={b.on} /></Slot>
                      <Slot $width={26}><BodyIcon kind={b.kind} /></Slot>
                      <NodeText>{b.name}</NodeText>
                    </Node>
                  </Row>
                ))}
              </Tree>
            </Panel>
          </OverlayLeft>
          <CubeHolder><ViewCube /></CubeHolder>
        </OverlayTop>
        <OverlayBottom>
          <PanelHead>
            <HeadSlot />
            <HeadTitle>COMMENTS</HeadTitle>
            <HeadTools>
              <button aria-label="Expand comments"><HeadDot plus /></button>
              <Grip />
            </HeadTools>
          </PanelHead>
          <NavBars>
            <NavBar>
              <NavButton aria-label="Orbit">
                <Ico s={18}>
                  <path d="M4 6.500C-1 9-1 12 6 13M12 13q6-2 4-5-1-1.500-4-2" stroke="#444" strokeWidth="1.200" />
                  <path d="M5 6Q6 1 8 1.500q3 1 3 7.500t-3 7.500q-2 0-2.500-4" stroke="#444" strokeWidth="1.200" />
                  <path d="M8 6.500v5M5.500 9h5" stroke="#1878d8" strokeWidth="1.500" />
                  <path d="M15 3l-3 3 4 1zM11 15l-3-1 2-2z" fill="#333" />
                </Ico>
                <Caret />
              </NavButton>
              <NavButton aria-label="Look at">
                <Ico s={18}>
                  <rect x="1.500" y="7" width="15" height="9.500" fill="#f0f0f2" stroke="#333" strokeWidth="1.200" />
                  <rect x="4.500" y="9.500" width="9" height="4" fill="#c8ccd6" stroke="#333" />
                  <path d="M2 5.500l3-3v2q5-3 10-2.500l-3 3" stroke="#444" strokeWidth="1.200" />
                </Ico>
              </NavButton>
              <NavButton aria-label="Pan">
                <Ico s={18}>
                  <path
                    d="M6 16.500c0-2-4-5-4.500-7.500 1.500-1 3 1 4 2L3.500 4.500c.5-1.500 2-1 2.300 0l1.400 3.700L6.800 2.500c.5-1.500 2-1.200 2.200 0l.6 5.500.8-5c.6-1.300 2-1 2 .3L12 8.500l2.300-4c1-1 2.200 0 1.700 1.200-1 3-2 5-3 10.800z"
                    fill="#fff" stroke="#333"
                  />
                </Ico>
              </NavButton>
              <NavButton aria-label="Zoom">
                <Ico s={18}>
                  <circle cx="6.500" cy="7.500" r="5" fill="#dcecea" stroke="#444" strokeWidth="1.200" />
                  <path d="M10 11.500l4 4" stroke="#222" strokeWidth="2.500" />
                  <path d="M15 1.500v5M12.500 4h5M12.500 8.500h5" stroke="#333" />
                </Ico>
              </NavButton>
              <NavButton aria-label="Fit">
                <Ico s={18}>
                  <rect x="1.500" y="1.500" width="15" height="15" stroke="#555" strokeDasharray="2 2" />
                  <circle cx="8" cy="8" r="6" fill="#dcecea" stroke="#444" strokeWidth="1.200" />
                  <path d="M12 12.500l4.500 4.500" stroke="#222" strokeWidth="2.500" />
                </Ico>
                <Caret />
              </NavButton>
            </NavBar>
            <NavBar>
              <NavButton aria-label="Display settings">
                <Ico s={18}>
                  <rect x="1.500" y="2" width="15" height="11" fill="#eef1f6" stroke="#333b52" strokeWidth="1.200" />
                  <rect x="3.500" y="4" width="11" height="7" fill="#9bbce6" stroke="#3c64a4" />
                  <path d="M7 13v2.500H5V17h8v-1.500h-2V13" fill="#eee" stroke="#333" />
                </Ico>
                <Caret />
              </NavButton>
              <NavButton aria-label="Grid and snaps">
                <Ico s={18}>
                  <rect x="1.500" y="1.500" width="15" height="15" fill="#f2f3f6" stroke="#444" />
                  <path d="M4.500 1v16M7.500 1v16M10.500 1v16M13.500 1v16M1 4.500h16M1 7.500h16M1 10.500h16M1 13.500h16" stroke="#666" />
                </Ico>
                <Caret />
              </NavButton>
              <NavButton aria-label="Viewports">
                <Ico s={18}>
                  <rect x="1.500" y="3" width="15" height="12" fill="#b4cdec" stroke="#2c4474" strokeWidth="1.200" />
                  <path d="M9 3v12M1.500 9h15" stroke="#2c4474" strokeWidth="1.200" />
                  <path d="M3.500 5h3.500v2H3.500zM11 5h3.500v2H11zM3.500 11h3.500v2H3.500zM11 11h3.500v2H11z" stroke="#6f98cc" />
                </Ico>
                <Caret />
              </NavButton>
            </NavBar>
          </NavBars>
        </OverlayBottom>
      </Overlay>
    </Viewport>
    <Timeline>
      <TimelineLeft>
        <Playback>
          {playPaths.map(([name, d]) => (
            <button key={name} aria-label={name}>
              <Ico s={17} w={16}>
                <path d={d} fill="#4a4a4a" stroke="#4a4a4a" strokeWidth="1.300" />
              </Ico>
            </button>
          ))}
        </Playback>
        <TimelineFeatures />
      </TimelineLeft>
      <button aria-label="Settings">
        <Ico s={16}>
          <circle cx="8" cy="8" r="4.500" stroke="#555" strokeWidth="2" />
          <circle cx="8" cy="8" r="6.300" stroke="#555" strokeWidth="2" strokeDasharray="2.500 2.450" />
          <circle cx="8" cy="8" r="1.500" fill="#555" />
        </Ico>
      </button>
    </Timeline>
  </Page>
);

export default App;
